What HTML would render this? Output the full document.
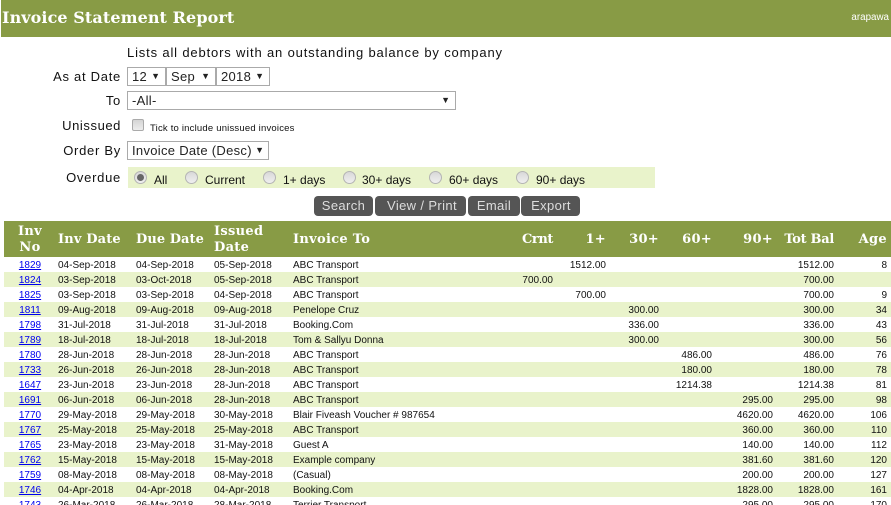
<!DOCTYPE html>
<html><head><meta charset="utf-8"><title>Invoice Statement Report</title>
<style>
html,body{margin:0;padding:0;width:891px;height:505px;overflow:hidden;background:#fff;font-family:"Liberation Sans",sans-serif;color:#111}
body{position:relative}
.a{position:absolute;white-space:nowrap}
#hd{left:1px;top:0;width:890px;height:37px;background:#889b45}
#title{left:2px;top:7px;font:bold 16px "DejaVu Serif",serif;letter-spacing:.08px;color:#fff;line-height:22px}
#co{right:2px;top:12px;font-size:9.8px;color:#fff;line-height:12px}
.lb{font-size:13px;letter-spacing:.72px;line-height:16px}
.r{text-align:right;width:121px;left:0}
.sel{box-sizing:border-box;border:1px solid #aaa;height:19px;background:#fff;font-size:13px;line-height:17px;padding-left:4px;letter-spacing:.3px;color:#222}
.sel i{position:absolute;right:5px;top:0;font-style:normal;font-size:9px;line-height:17px;letter-spacing:0}
.rad{box-sizing:border-box;width:13px;height:13px;border-radius:50%;border:1px solid #b4b4b4;background:linear-gradient(#d8d8d8,#f0f0f0);top:171px}
.rad.on::after{content:"";position:absolute;left:2px;top:2px;width:7px;height:7px;border-radius:50%;background:#666}
.rl{font-size:12px;top:173px;line-height:14px}
.btn{box-sizing:border-box;top:196px;height:20px;background:#555;border-radius:4px;color:#ddd;font-size:13px;line-height:20px;text-align:center;letter-spacing:.37px}
#t{position:absolute;left:4px;top:221px;width:887px;border-collapse:collapse;table-layout:fixed;font-size:10px}
#t th{background:#889b45;color:#fff;font:bold 13px/16px "DejaVu Serif",serif;letter-spacing:.3px;height:34px;padding:2px 2px 0;text-align:left;overflow:visible;white-space:nowrap}
#t td{height:13px;padding:2px 2px 0;line-height:13px;white-space:nowrap;overflow:hidden}
#t tbody tr:nth-child(even) td{background:#e9f3cb}
#t .n{text-align:right}
#t .c{text-align:center}
#t a{color:#00e}
</style></head><body>
<div class="a" id="hd"></div>
<div class="a" id="title">Invoice Statement Report</div>
<div class="a" id="co">arapawa</div>

<div class="a lb" style="left:127px;top:45px;letter-spacing:.84px">Lists all debtors with an outstanding balance by company</div>

<div class="a lb r" style="top:69px">As at Date</div>
<div class="a sel" style="left:127px;top:67px;width:39px">12<i>▼</i></div>
<div class="a sel" style="left:166px;top:67px;width:50px">Sep<i>▼</i></div>
<div class="a sel" style="left:216px;top:67px;width:54px">2018<i>▼</i></div>

<div class="a lb r" style="top:93px">To</div>
<div class="a sel" style="left:127px;top:91px;width:329px">-All-<i>▼</i></div>

<div class="a lb r" style="top:118px;letter-spacing:.58px">Unissued</div>
<div class="a" style="box-sizing:border-box;left:132px;top:119px;width:12px;height:12px;border:1px solid #aaa;border-radius:2px;background:linear-gradient(#d5d5d5,#ededed)"></div>
<div class="a" style="left:150px;top:123px;font-size:9.5px;line-height:12px;letter-spacing:.2px">Tick to include unissued invoices</div>

<div class="a lb r" style="top:143px">Order By</div>
<div class="a sel" style="left:127px;top:141px;width:142px">Invoice Date (Desc)<i style="right:4px">▼</i></div>

<div class="a lb r" style="top:170px">Overdue</div>
<div class="a" style="left:128px;top:167px;width:527px;height:21px;background:#e9f3cb"></div>
<div class="a rad on" style="left:134px"></div><div class="a rl" style="left:154px">All</div>
<div class="a rad" style="left:185px"></div><div class="a rl" style="left:205px">Current</div>
<div class="a rad" style="left:263px"></div><div class="a rl" style="left:283px">1+ days</div>
<div class="a rad" style="left:343px"></div><div class="a rl" style="left:362px">30+ days</div>
<div class="a rad" style="left:429px"></div><div class="a rl" style="left:449px">60+ days</div>
<div class="a rad" style="left:516px"></div><div class="a rl" style="left:536px">90+ days</div>

<div class="a btn" style="left:314px;width:59px">Search</div>
<div class="a btn" style="left:375px;width:91px;padding-left:3px">View / Print</div>
<div class="a btn" style="left:468px;width:52px">Email</div>
<div class="a btn" style="left:521px;width:59px;padding-left:1px">Export</div>

<table id="t">
<colgroup><col style="width:52px"><col style="width:78px"><col style="width:78px"><col style="width:79px"><col style="width:209px"><col style="width:55px"><col style="width:53px"><col style="width:53px"><col style="width:53px"><col style="width:61px"><col style="width:61px"><col style="width:53px"><col style="width:2px"></colgroup>
<thead><tr><th class="c" style="text-align:center">Inv<br>No</th><th style="letter-spacing:.15px">Inv Date</th><th style="letter-spacing:.05px">Due Date</th><th>Issued<br>Date</th><th>Invoice To</th><th class="n" style="text-align:right;letter-spacing:-.4px">Crnt</th><th style="text-align:right">1+</th><th style="text-align:right">30+</th><th style="text-align:right">60+</th><th style="text-align:right">90+</th><th style="text-align:right;letter-spacing:-.3px">Tot Bal</th><th style="text-align:right">Age</th><th></th></tr></thead>
<tbody>
<tr><td class="c"><a href="#">1829</a></td><td>04-Sep-2018</td><td>04-Sep-2018</td><td>05-Sep-2018</td><td>ABC Transport</td><td></td><td class="n">1512.00</td><td></td><td></td><td></td><td class="n">1512.00</td><td class="n">8</td><td></td></tr>
<tr><td class="c"><a href="#">1824</a></td><td>03-Sep-2018</td><td>03-Oct-2018</td><td>05-Sep-2018</td><td>ABC Transport</td><td class="n">700.00</td><td></td><td></td><td></td><td></td><td class="n">700.00</td><td class="n"></td><td></td></tr>
<tr><td class="c"><a href="#">1825</a></td><td>03-Sep-2018</td><td>03-Sep-2018</td><td>04-Sep-2018</td><td>ABC Transport</td><td></td><td class="n">700.00</td><td></td><td></td><td></td><td class="n">700.00</td><td class="n">9</td><td></td></tr>
<tr><td class="c"><a href="#">1811</a></td><td>09-Aug-2018</td><td>09-Aug-2018</td><td>09-Aug-2018</td><td>Penelope Cruz</td><td></td><td></td><td class="n">300.00</td><td></td><td></td><td class="n">300.00</td><td class="n">34</td><td></td></tr>
<tr><td class="c"><a href="#">1798</a></td><td>31-Jul-2018</td><td>31-Jul-2018</td><td>31-Jul-2018</td><td>Booking.Com</td><td></td><td></td><td class="n">336.00</td><td></td><td></td><td class="n">336.00</td><td class="n">43</td><td></td></tr>
<tr><td class="c"><a href="#">1789</a></td><td>18-Jul-2018</td><td>18-Jul-2018</td><td>18-Jul-2018</td><td>Tom &amp; Sallyu Donna</td><td></td><td></td><td class="n">300.00</td><td></td><td></td><td class="n">300.00</td><td class="n">56</td><td></td></tr>
<tr><td class="c"><a href="#">1780</a></td><td>28-Jun-2018</td><td>28-Jun-2018</td><td>28-Jun-2018</td><td>ABC Transport</td><td></td><td></td><td></td><td class="n">486.00</td><td></td><td class="n">486.00</td><td class="n">76</td><td></td></tr>
<tr><td class="c"><a href="#">1733</a></td><td>26-Jun-2018</td><td>26-Jun-2018</td><td>28-Jun-2018</td><td>ABC Transport</td><td></td><td></td><td></td><td class="n">180.00</td><td></td><td class="n">180.00</td><td class="n">78</td><td></td></tr>
<tr><td class="c"><a href="#">1647</a></td><td>23-Jun-2018</td><td>23-Jun-2018</td><td>28-Jun-2018</td><td>ABC Transport</td><td></td><td></td><td></td><td class="n">1214.38</td><td></td><td class="n">1214.38</td><td class="n">81</td><td></td></tr>
<tr><td class="c"><a href="#">1691</a></td><td>06-Jun-2018</td><td>06-Jun-2018</td><td>28-Jun-2018</td><td>ABC Transport</td><td></td><td></td><td></td><td></td><td class="n">295.00</td><td class="n">295.00</td><td class="n">98</td><td></td></tr>
<tr><td class="c"><a href="#">1770</a></td><td>29-May-2018</td><td>29-May-2018</td><td>30-May-2018</td><td>Blair Fiveash Voucher # 987654</td><td></td><td></td><td></td><td></td><td class="n">4620.00</td><td class="n">4620.00</td><td class="n">106</td><td></td></tr>
<tr><td class="c"><a href="#">1767</a></td><td>25-May-2018</td><td>25-May-2018</td><td>25-May-2018</td><td>ABC Transport</td><td></td><td></td><td></td><td></td><td class="n">360.00</td><td class="n">360.00</td><td class="n">110</td><td></td></tr>
<tr><td class="c"><a href="#">1765</a></td><td>23-May-2018</td><td>23-May-2018</td><td>31-May-2018</td><td>Guest A</td><td></td><td></td><td></td><td></td><td class="n">140.00</td><td class="n">140.00</td><td class="n">112</td><td></td></tr>
<tr><td class="c"><a href="#">1762</a></td><td>15-May-2018</td><td>15-May-2018</td><td>15-May-2018</td><td>Example company</td><td></td><td></td><td></td><td></td><td class="n">381.60</td><td class="n">381.60</td><td class="n">120</td><td></td></tr>
<tr><td class="c"><a href="#">1759</a></td><td>08-May-2018</td><td>08-May-2018</td><td>08-May-2018</td><td>(Casual)</td><td></td><td></td><td></td><td></td><td class="n">200.00</td><td class="n">200.00</td><td class="n">127</td><td></td></tr>
<tr><td class="c"><a href="#">1746</a></td><td>04-Apr-2018</td><td>04-Apr-2018</td><td>04-Apr-2018</td><td>Booking.Com</td><td></td><td></td><td></td><td></td><td class="n">1828.00</td><td class="n">1828.00</td><td class="n">161</td><td></td></tr>
<tr><td class="c"><a href="#">1743</a></td><td>26-Mar-2018</td><td>26-Mar-2018</td><td>28-Mar-2018</td><td>Terrier Transport</td><td></td><td></td><td></td><td></td><td class="n">295.00</td><td class="n">295.00</td><td class="n">170</td><td></td></tr>
</tbody></table>
</body></html>
